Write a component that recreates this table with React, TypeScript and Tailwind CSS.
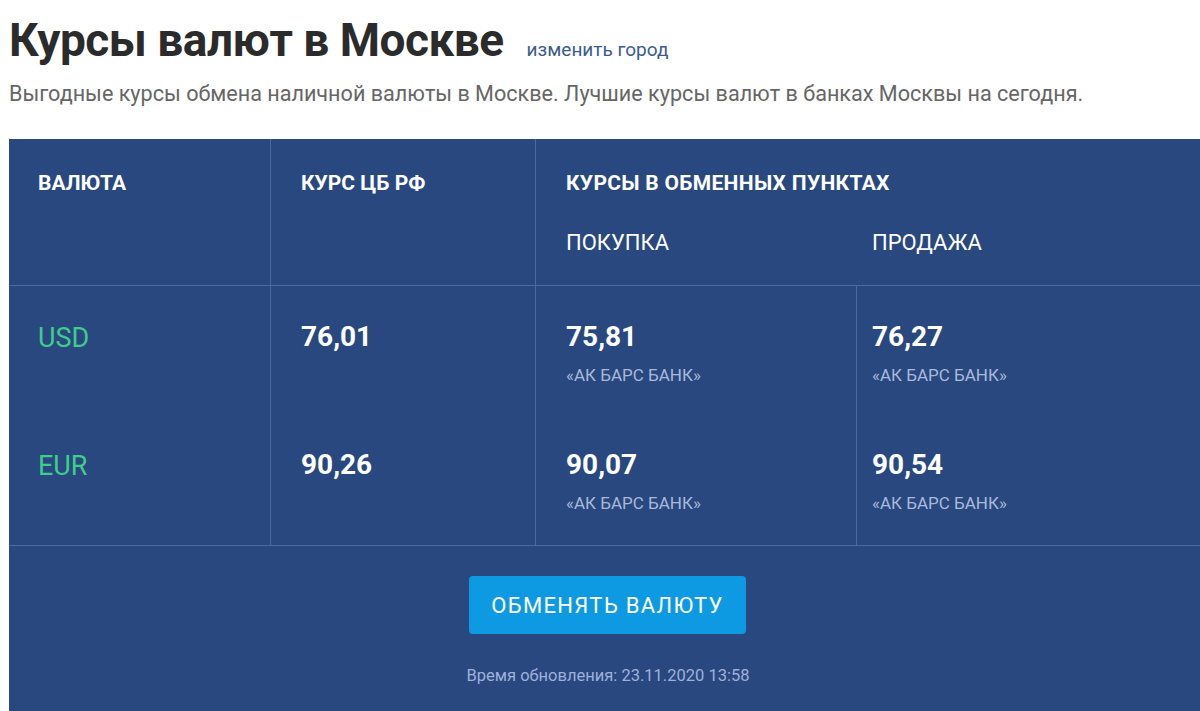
import React from "react";

const rows = [
  { code: "USD", cb: "76,01", buy: "75,81", sell: "76,27", bank: "«АК БАРС БАНК»" },
  { code: "EUR", cb: "90,26", buy: "90,07", sell: "90,54", bank: "«АК БАРС БАНК»" },
];

export default function App() {
  return (
    <div className="min-h-[711px] overflow-hidden bg-white font-['Roboto','Open_Sans',sans-serif]">
      {/* Heading */}
      <div className="flex items-baseline gap-[23px] pl-[9px] pt-[12px]">
        <h1 className="text-[46px] font-bold leading-[56px] tracking-[-0.5px] text-[#2b2b2b]">Курсы валют в Москве</h1>
        <a href="#" className="text-[19px] text-[#3b5b8f]">изменить город</a>
      </div>
      <p className="mt-[12px] pl-[9px] text-[21.6px] leading-[28px] text-[#666666]">
        Выгодные курсы обмена наличной валюты в Москве. Лучшие курсы валют в банках Москвы на сегодня.
      </p>

      {/* Rates panel */}
      <div className="ml-[9px] mt-[31px] min-h-[580px] bg-[#28487f] text-white">
        {/* Header */}
        <div className="grid h-[147px] grid-cols-[262px_265px_1fr] border-b border-[#4c6aa0]">
          <div className="border-r border-[#4c6aa0] pl-[29px] pt-[29px] text-[21px] font-bold">ВАЛЮТА</div>
          <div className="border-r border-[#4c6aa0] pl-[30px] pt-[29px] text-[21px] font-bold">КУРС ЦБ РФ</div>
          <div className="pt-[29px]">
            <div className="pl-[30px] text-[21px] font-bold tracking-[0.3px]">КУРСЫ В ОБМЕННЫХ ПУНКТАХ</div>
            <div className="mt-[26px] grid grid-cols-[321px_1fr] text-[22px]">
              <div className="pl-[30px]">ПОКУПКА</div>
              <div className="pl-[15px]">ПРОДАЖА</div>
            </div>
          </div>
        </div>

        {/* Body */}
        <div className="grid h-[260px] grid-cols-[262px_265px_321px_1fr] border-b border-[#4c6aa0]">
          <div className="border-r border-[#4c6aa0] pl-[29px] pt-[35px]">
            {rows.map((r) => (
              <div key={r.code} className="h-[128px] text-[27px] leading-[34px] text-[#3fcc8c] last:h-auto">{r.code}</div>
            ))}
          </div>
          <div className="border-r border-[#4c6aa0] pl-[30px] pt-[34px]">
            {rows.map((r) => (
              <div key={r.code} className="h-[128px] text-[28px] font-bold leading-[34px] last:h-auto">{r.cb}</div>
            ))}
          </div>
          <div className="border-r border-[#4c6aa0] pl-[30px] pt-[34px]">
            {rows.map((r) => (
              <div key={r.code} className="h-[128px] last:h-auto">
                <div className="text-[28px] font-bold leading-[34px]">{r.buy}</div>
                <div className="mt-[9px] text-[17px] leading-[24px] text-[#a9badb]">{r.bank}</div>
              </div>
            ))}
          </div>
          <div className="pl-[15px] pt-[34px]">
            {rows.map((r) => (
              <div key={r.code} className="h-[128px] last:h-auto">
                <div className="text-[28px] font-bold leading-[34px]">{r.sell}</div>
                <div className="mt-[9px] text-[17px] leading-[24px] text-[#a9badb]">{r.bank}</div>
              </div>
            ))}
          </div>
        </div>

        {/* Footer */}
        <div className="flex flex-col items-center pt-[30px]">
          <button className="ml-[6px] h-[58px] w-[277px] rounded-[4px] bg-[#0e9ae2] text-[22px] tracking-[1.3px] text-white">
            ОБМЕНЯТЬ ВАЛЮТУ
          </button>
          <div className="ml-[7px] mt-[31px] text-[16.5px] leading-[22px] text-[#9fb1da]">Время обновления: 23.11.2020 13:58</div>
        </div>
      </div>
    </div>
  );
}
